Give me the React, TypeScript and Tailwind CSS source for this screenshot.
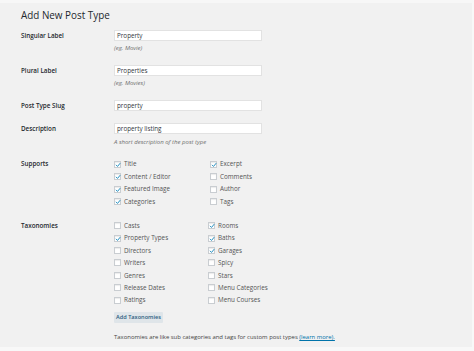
import React from "react";

function Check({ checked }: { checked: boolean }) {
  return (
    <span className="relative inline-flex h-[7px] w-[7px] shrink-0 items-center justify-center border border-[#c9cdd1] bg-white shadow-[inset_0_1px_1px_rgba(0,0,0,0.08)]">
      {checked && (
        <svg viewBox="0 0 10 10" className="absolute left-[0px] top-[0px] h-[6px] w-[6px]">
          <path d="M2 5.2 L4.2 7.4 L8.3 2.4" fill="none" stroke="#1e8cbe" strokeWidth="1.6" strokeLinecap="round" strokeLinejoin="round" />
        </svg>
      )}
    </span>
  );
}

function Item({ label, checked, h }: { label: string; checked: boolean; h: string }) {
  return (
    <div className={`flex items-center ${h}`}>
      <Check checked={checked} />
      <span className="ml-[3px] text-[6.3px] text-[#555]">{label}</span>
    </div>
  );
}

function Input({ value }: { value: string }) {
  return (
    <div className="flex h-[10.5px] w-[148px] items-center border border-[#e2e2e2] bg-white pl-[2px] text-[6.3px] text-[#32373c]">
      {value}
    </div>
  );
}

function Label({ children, h }: { children: React.ReactNode; h: string }) {
  return (
    <div className={`flex w-[93px] shrink-0 items-center ${h} text-[6.3px] font-semibold text-[#23282d]`}>
      {children}
    </div>
  );
}

function Hint({ children, mt }: { children: React.ReactNode; mt: string }) {
  return (
    <div className={`${mt} ml-[93px] h-[9px] text-[6px] italic leading-[9px] text-[#6f6f6f]`}>{children}</div>
  );
}

export default function App() {
  const supportsLeft: [string, boolean][] = [
    ["Title", true],
    ["Content / Editor", true],
    ["Featured Image", true],
    ["Categories", true],
  ];
  const supportsRight: [string, boolean][] = [
    ["Excerpt", true],
    ["Comments", false],
    ["Author", false],
    ["Tags", false],
  ];
  const taxLeft: [string, boolean][] = [
    ["Casts", false],
    ["Property Types", true],
    ["Directors", false],
    ["Writers", false],
    ["Genres", false],
    ["Release Dates", false],
    ["Ratings", false],
  ];
  const taxRight: [string, boolean][] = [
    ["Rooms", true],
    ["Baths", true],
    ["Garages", true],
    ["Spicy", false],
    ["Stars", false],
    ["Menu Categories", false],
    ["Menu Courses", false],
  ];
  return (
    <div className="box-border h-[351px] w-[474px] overflow-hidden border-t-[3px] border-r-[2px] border-b-[4px] border-t-[#f7f7f7] border-r-[#f8f8f8] border-b-[#f8f8f8] bg-[#f1f1f1] pl-[21px] font-['Open_Sans',sans-serif]">
      <div className="h-[24px] text-[9.9px] leading-[24px] text-[#23282d]">Add New Post Type</div>

      <div className="mt-[3px] flex">
        <Label h="h-[10.5px]">Singular Label</Label>
        <Input value="Property" />
      </div>
      <Hint mt="mt-[3px]">(eg. Movie)</Hint>

      <div className="mt-[12.5px] flex">
        <Label h="h-[10.5px]">Plural Label</Label>
        <Input value="Properties" />
      </div>
      <Hint mt="mt-[3px]">(eg. Movies)</Hint>

      <div className="mt-[12.5px] flex">
        <Label h="h-[10.5px]">Post Type Slug</Label>
        <Input value="property" />
      </div>

      <div className="mt-[12.8px] flex">
        <Label h="h-[10.5px]">Description</Label>
        <Input value="property listing" />
      </div>
      <Hint mt="mt-[4px]">A short description of the post type</Hint>

      <div className="mt-[11px] flex">
        <Label h="h-[12.5px]">Supports</Label>
        <div className="flex">
          <div className="flex w-[96px] flex-col">
            {supportsLeft.map(([l, c]) => (
              <Item key={l} label={l} checked={c} h="h-[12.5px]" />
            ))}
          </div>
          <div className="flex flex-col">
            {supportsRight.map(([l, c]) => (
              <Item key={l} label={l} checked={c} h="h-[12.5px]" />
            ))}
          </div>
        </div>
      </div>

      <div className="mt-[11.75px] flex">
        <Label h="h-[12.4px]">Taxonomies</Label>
        <div className="flex flex-col">
          <div className="flex">
            <div className="flex w-[94px] flex-col">
              {taxLeft.map(([l, c]) => (
                <Item key={l} label={l} checked={c} h="h-[12.4px]" />
              ))}
            </div>
            <div className="flex flex-col">
              {taxRight.map(([l, c]) => (
                <Item key={l} label={l} checked={c} h="h-[12.4px]" />
              ))}
            </div>
          </div>
          <div className="mt-[5.5px] flex h-[11px] w-[49px] items-center justify-center rounded-[1px] bg-[#dfe5e9] text-[5.6px] font-semibold text-[#2a5d7f]">
            Add Taxonomies
          </div>
          <div className="mt-[10.5px] h-[9px] whitespace-nowrap text-[5.95px] leading-[9px] text-[#444]">
            Taxonomies are like sub categories and tags for custom post types{" "}
            <span className="text-[#0073aa] underline">(learn more).</span>
          </div>
        </div>
      </div>
    </div>
  );
}
